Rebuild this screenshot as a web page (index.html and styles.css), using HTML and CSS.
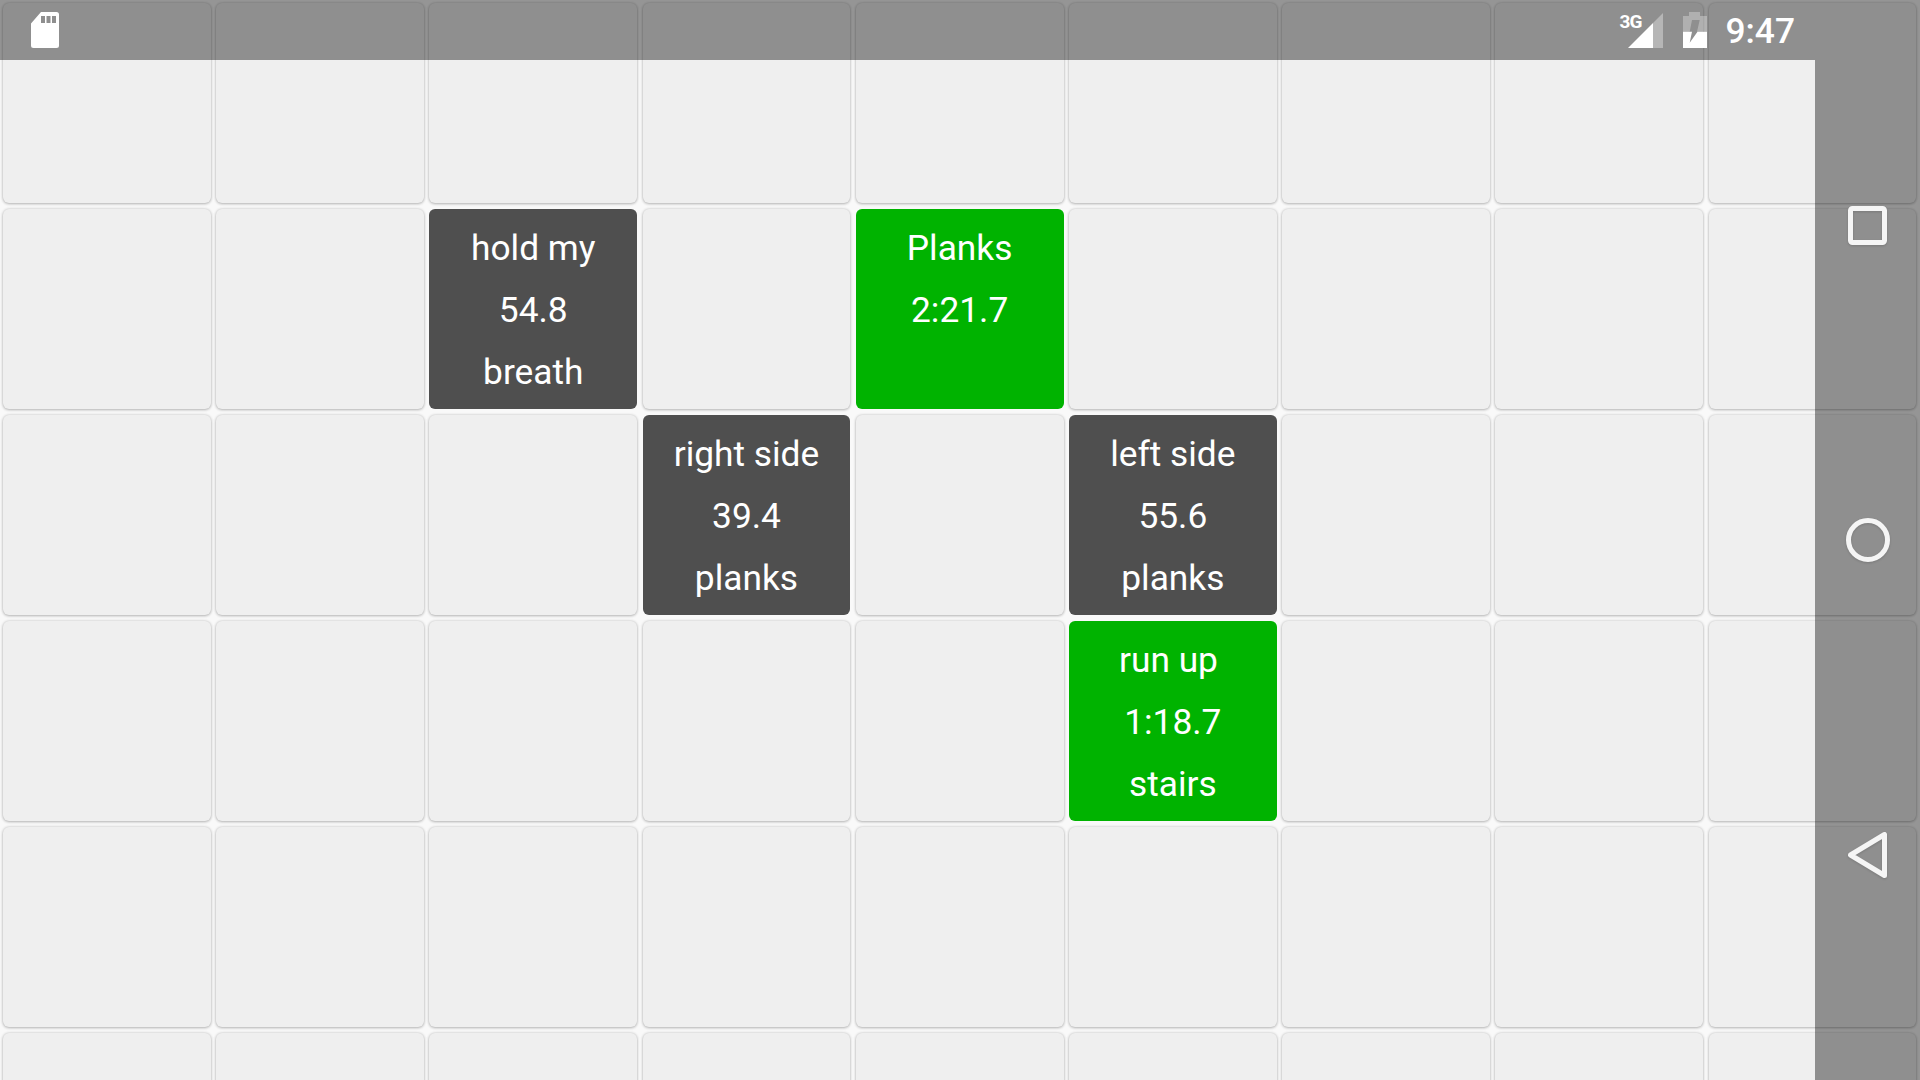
FILE: index.html
```html
<!DOCTYPE html>
<html lang="en">
<head>
<meta charset="utf-8">
<title>Timers</title>
<link rel="stylesheet" href="styles.css">
</head>
<body>
<div class="screen">
  <main class="grid">
    <div class="cell"></div><div class="cell"></div><div class="cell"></div><div class="cell"></div><div class="cell"></div><div class="cell"></div><div class="cell"></div><div class="cell"></div><div class="cell"></div>

    <div class="cell"></div><div class="cell"></div>
    <div class="cell tile dark"><span>hold my</span><span>54.8</span><span>breath</span></div>
    <div class="cell"></div>
    <div class="cell tile green"><span>Planks</span><span>2:21.7</span></div>
    <div class="cell"></div><div class="cell"></div><div class="cell"></div><div class="cell"></div>

    <div class="cell"></div><div class="cell"></div><div class="cell"></div>
    <div class="cell tile dark"><span>right side</span><span>39.4</span><span>planks</span></div>
    <div class="cell"></div>
    <div class="cell tile dark"><span>left side</span><span>55.6</span><span>planks</span></div>
    <div class="cell"></div><div class="cell"></div><div class="cell"></div>

    <div class="cell"></div><div class="cell"></div><div class="cell"></div><div class="cell"></div><div class="cell"></div>
    <div class="cell tile green"><span>run up </span><span>1:18.7</span><span>stairs</span></div>
    <div class="cell"></div><div class="cell"></div><div class="cell"></div>

    <div class="cell"></div><div class="cell"></div><div class="cell"></div><div class="cell"></div><div class="cell"></div><div class="cell"></div><div class="cell"></div><div class="cell"></div><div class="cell"></div>

    <div class="cell"></div><div class="cell"></div><div class="cell"></div><div class="cell"></div><div class="cell"></div><div class="cell"></div><div class="cell"></div><div class="cell"></div><div class="cell"></div>
  </main>

  <header class="status">
    <svg class="sd" viewBox="0 0 28 36" aria-hidden="true">
      <path fill-rule="evenodd" fill="#fff" d="M10 0H25.500A2.500 2.500 0 0 1 28 2.500V33.500A2.500 2.500 0 0 1 25.500 36H2.500A2.500 2.500 0 0 1 0 33.500V11.500ZM10 4V11H14V4ZM15.500 4V11H19.500V4ZM21 4V11H25V4Z"/>
    </svg>
    <div class="indicators">
      <div class="signal">
        <span class="net">3G</span>
        <svg class="bars" viewBox="0 0 35 35" aria-hidden="true">
          <path fill="#fff" fill-opacity=".35" d="M35 0V35H25V10Z"/>
          <path fill="#fff" d="M25 10V35H0Z"/>
        </svg>
      </div>
      <svg class="battery" viewBox="0 0 24 36" aria-hidden="true">
        <path fill="#fff" fill-opacity=".3" d="M6 0H17V4H24V19.700H14L16.700 8H9L6.700 19.700H0V4H6Z"/>
        <path fill="#fff" d="M0 19.700H9L6.700 30.700L14.500 19.700H24V36H0Z"/>
      </svg>
      <span class="clock">9:47</span>
    </div>
  </header>

  <nav class="navbar">
    <svg class="recent" viewBox="0 0 39 39" aria-hidden="true">
      <rect x="2.500" y="2.500" width="34" height="34" rx="2" fill="none" stroke="#f5f5f5" stroke-width="5"/>
    </svg>
    <svg class="home" viewBox="0 0 44 44" aria-hidden="true">
      <circle cx="22" cy="22" r="19.500" fill="none" stroke="#f5f5f5" stroke-width="5"/>
    </svg>
    <svg class="back" viewBox="0 0 39 46" aria-hidden="true">
      <path d="M36.500 2.500V43.500L2.500 23Z" fill="none" stroke="#f5f5f5" stroke-width="5" stroke-linejoin="round"/>
    </svg>
  </nav>
</div>
</body>
</html>
```

FILE: styles.css
```css
html, body {
  margin: 0;
  padding: 0;
  height: 100%;
  overflow: hidden;
  background: #f9f9f9;
}

.screen {
  position: relative;
  width: 1920px;
  height: 1080px;
  overflow: hidden;
  font-family: Roboto, "Liberation Sans", sans-serif;
}

.grid {
  display: grid;
  grid-template-columns: repeat(9, 207.800px);
  grid-auto-rows: 200px;
  column-gap: 5.400px;
  row-gap: 6px;
  padding: 3px;
}

.cell {
  background: #efefef;
  border-radius: 6px;
  box-shadow: 0 1px 3px rgba(0, 0, 0, .22), 0 0 3px rgba(0, 0, 0, .17);
}

.tile {
  display: flex;
  flex-direction: column;
  align-items: center;
  padding-top: 8px;
  box-sizing: border-box;
  box-shadow: none;
  color: #fff;
  font-size: 35.300px;
  line-height: 62px;
  white-space: pre;
}

.dark { background: #4f4f4f; }
.green { background: #00b300; }

.status {
  position: absolute;
  top: 0;
  left: 0;
  right: 0;
  height: 60px;
  display: flex;
  justify-content: space-between;
  padding: 0 125px 0 31px;
  box-sizing: border-box;
  background: rgba(0, 0, 0, .4);
}

.sd {
  width: 28px;
  height: 36px;
  margin-top: 12px;
}

.indicators {
  display: flex;
  align-items: flex-start;
}

.signal {
  position: relative;
  width: 43px;
  height: 60px;
}

.net {
  position: absolute;
  left: 0;
  top: 13px;
  color: #fff;
  font-size: 19px;
  line-height: 17px;
  font-weight: 700;
  letter-spacing: -1px;
}

.bars {
  position: absolute;
  left: 8px;
  top: 13px;
  width: 35px;
  height: 35px;
}

.battery {
  width: 24px;
  height: 36px;
  margin: 12px 0 0 20px;
}

.clock {
  margin-left: 19px;
  color: #fff;
  font-size: 35.300px;
  font-weight: 500;
  line-height: 62px;
}

.navbar {
  position: absolute;
  top: 60px;
  right: 0;
  bottom: 0;
  width: 105px;
  background: rgba(0, 0, 0, .4);
}

.recent, .home, .back {
  position: absolute;
  filter: drop-shadow(0 1px 1px rgba(0, 0, 0, .15));
}

.recent {
  left: 33px;
  top: 146px;
  width: 39px;
  height: 39px;
}

.home {
  left: 31px;
  top: 458px;
  width: 44px;
  height: 44px;
}

.back {
  left: 33px;
  top: 772px;
  width: 39px;
  height: 46px;
}
```
